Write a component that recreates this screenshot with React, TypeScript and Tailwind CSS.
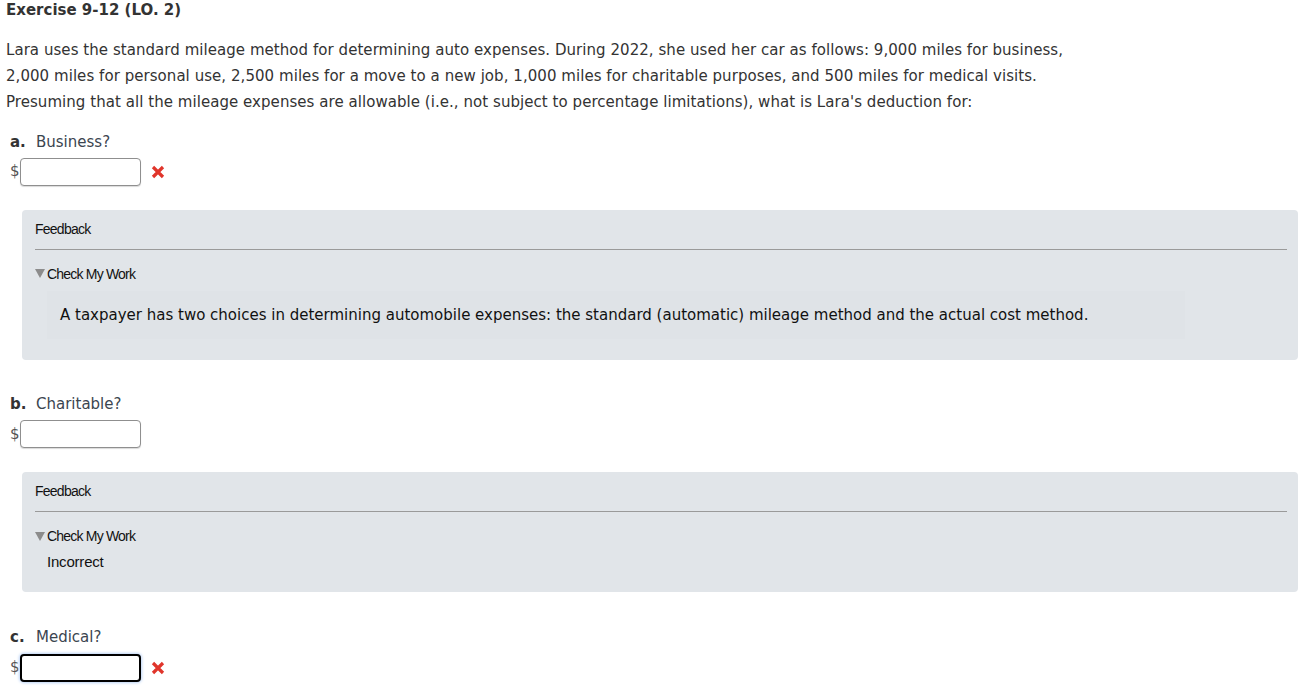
import React from "react";

const verdana = { fontFamily: '"DejaVu Sans", Verdana, sans-serif' };

// red cross shown next to a wrong answer
function WrongMark() {
  return (
    <svg width="14" height="14" viewBox="0 0 14 14" className="ml-[10px]">
      <path d="M2 2 L12 12 M12 2 L2 12" stroke="#e0352b" strokeWidth="3.2" strokeLinecap="butt" />
    </svg>
  );
}

function AnswerRow({ wrong, focused }: { wrong?: boolean; focused?: boolean }) {
  return (
    <div className="flex h-[28px] items-center pl-[10px]">
      <span className="text-[15px] leading-none text-[#555]">$</span>
      <div
        className={
          focused
            ? "h-[28px] w-[121px] rounded-[4px] border-2 border-black bg-white shadow-[0_0_3px_1px_#bcd3f5]"
            : "h-[28px] w-[121px] rounded-[4px] border border-[#8f8f8f] bg-white shadow-[0_1px_1px_rgba(0,0,0,0.15)]"
        }
      />
      {wrong && <WrongMark />}
    </div>
  );
}

function Label({ letter, text }: { letter: string; text: string }) {
  return (
    <div className="flex items-baseline pl-[10px] text-[15px] text-[#333]">
      <span className="w-[26px] font-bold text-[#333]">{letter}</span>
      <span className="text-[#3b4550]">{text}</span>
    </div>
  );
}

function Feedback({ children }: { children: React.ReactNode }) {
  return (
    <div className="ml-[22px] mr-[10px] rounded-[4px] bg-[#e1e5e9] px-[13px] pb-[21px] pt-[10px] font-['Liberation_Sans',Arial,sans-serif] text-[#111]">
      <div className="h-[19px] text-[14px] leading-[19px] tracking-[-0.75px]">Feedback</div>
      <div className="mr-[-2px] mt-[10px] h-px bg-[#9a9a9a]" />
      <div className="mt-[15px] flex items-center text-[14px] leading-[18px] tracking-[-0.8px]">
        <svg width="10" height="9" viewBox="0 0 10 9" className="mr-[2px]">
          <path d="M0 0 H10 L5 9 Z" fill="#8c8c8c" />
        </svg>
        Check My Work
      </div>
      {children}
    </div>
  );
}

export default function App() {
  return (
    <div className="min-h-[691px] bg-white pt-[2px] text-[#333]" style={verdana}>
      {/* TITLE */}
      <h1 className="pl-[6px] text-[15px] font-bold leading-[16px] text-[#333]">Exercise 9-12 (LO. 2)</h1>

      {/* QUESTION */}
      <p className="mt-[19px] pl-[6px] text-[15px] leading-[26px] tracking-[0.05px] text-[#333]">
        Lara uses the standard mileage method for determining auto expenses. During 2022, she used her car as follows: 9,000 miles for business,
        <br />
        2,000 miles for personal use, 2,500 miles for a move to a new job, 1,000 miles for charitable purposes, and 500 miles for medical visits.
        <br />
        Presuming that all the mileage expenses are allowable (i.e., not subject to percentage limitations), what is Lara's deduction for:
      </p>

      {/* A */}
      <div className="mt-[16px]">
        <Label letter="a." text="Business?" />
      </div>
      <div className="mt-[4px]">
        <AnswerRow wrong />
      </div>
      <div className="mt-[24px]">
        <Feedback>
          <div className="ml-[12px] mr-[100px] mt-[8px] bg-[#dfe3e7] py-[14px] pl-[13px] text-[15px] leading-[20px] text-[#111]" style={verdana}>
            A taxpayer has two choices in determining automobile expenses: the standard (automatic) mileage method and the actual cost method.
          </div>
        </Feedback>
      </div>

      {/* B */}
      <div className="mt-[33px]">
        <Label letter="b." text="Charitable?" />
      </div>
      <div className="mt-[5px]">
        <AnswerRow />
      </div>
      <div className="mt-[24px]">
        <Feedback>
          <div className="ml-[12px] mt-[8px] text-[15px] leading-[18px] tracking-[-0.2px]">Incorrect</div>
        </Feedback>
      </div>

      {/* C */}
      <div className="mt-[34px]">
        <Label letter="c." text="Medical?" />
      </div>
      <div className="mt-[5px]">
        <AnswerRow wrong focused />
      </div>
    </div>
  );
}
